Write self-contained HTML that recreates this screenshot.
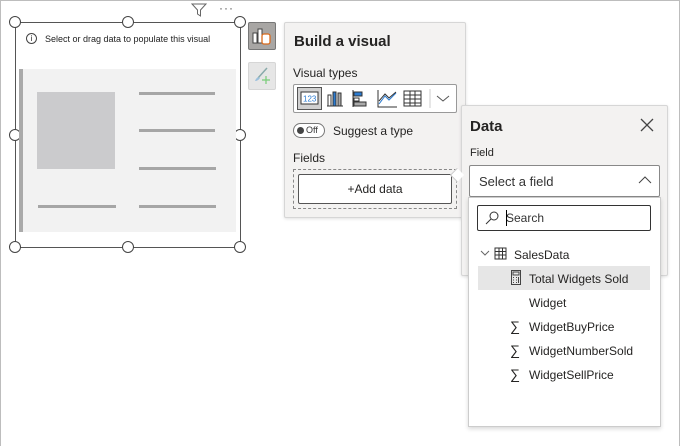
<!DOCTYPE html>
<html><head><style>
*{box-sizing:border-box;margin:0;padding:0}
body{width:680px;height:446px;background:#fff;font-family:"Liberation Sans",sans-serif;color:#252423;position:relative;overflow:hidden}
.a{position:absolute}
.h{position:absolute;width:12px;height:12px;border:1px solid #444;border-radius:50%;background:#fff}
.ln{position:absolute;height:3px;background:#a6a6a6}
</style></head><body>
<div class="a" style="left:0;top:0;width:680px;height:446px;border:1px solid #bdbdbd;border-bottom:none"></div>
<!-- visual frame -->
<div class="a" style="left:15px;top:22px;width:226px;height:226px;border:1px solid #555"></div>
<div class="h" style="left:9px;top:16px"></div><div class="h" style="left:122px;top:16px"></div><div class="h" style="left:234px;top:16px"></div>
<div class="h" style="left:9px;top:129px"></div><div class="h" style="left:234px;top:129px"></div>
<div class="h" style="left:9px;top:241px"></div><div class="h" style="left:122px;top:241px"></div><div class="h" style="left:234px;top:241px"></div>
<svg class="a" style="left:191px;top:3px" width="16" height="14"><path d="M1 1H15L9.5 7V13L6.5 11V7Z" fill="none" stroke="#666"/></svg>
<div class="a" style="left:219px;top:1px;font-size:12px;color:#555;letter-spacing:1px">···</div>
<div class="a" style="left:26px;top:33px;width:11px;height:11px;border:1px solid #444;border-radius:50%;font-size:8px;text-align:center;line-height:9px">i</div>
<div class="a" style="left:45px;top:34px;font-size:9px;color:#222">Select or drag data to populate this visual</div>
<div class="a" style="left:19px;top:69px;width:217px;height:163px;background:#f2f2f2"></div>
<div class="a" style="left:19px;top:69px;width:4px;height:163px;background:#aaa"></div>
<div class="a" style="left:37px;top:92px;width:78px;height:77px;background:#cbcbcd"></div>
<div class="ln" style="left:139px;top:92px;width:76px"></div>
<div class="ln" style="left:139px;top:129px;width:76px"></div>
<div class="ln" style="left:139px;top:167px;width:77px"></div>
<div class="ln" style="left:139px;top:205px;width:77px"></div>
<div class="ln" style="left:38px;top:205px;width:78px"></div>
<!-- side buttons -->
<div class="a" style="left:248px;top:22px;width:28px;height:28px;background:#a8a6a4;border:1px solid #777;border-radius:2px"></div>
<svg class="a" style="left:252px;top:26px" width="20" height="20"><rect x="1" y="7" width="4" height="10" fill="#fff" stroke="#444"/><rect x="6" y="3" width="4" height="14" fill="#fff" stroke="#444"/><rect x="10" y="8" width="8" height="10" rx="2" fill="#fff" stroke="#d86a1c" stroke-width="1.3"/></svg>
<div class="a" style="left:248px;top:62px;width:28px;height:28px;background:#e6e6e6;border:1px solid #d6d6d6;border-radius:2px"></div>
<svg class="a" style="left:252px;top:66px" width="20" height="20"><path d="M15 2L6 12" stroke="#8aa" stroke-width="1.5"/><path d="M3 15Q5 10 8 12Q6 15 3 15Z" fill="#9bc0dd"/><path d="M14 10V18M10 14H18" stroke="#7c7" stroke-width="1.2"/></svg>
<!-- build panel -->
<div class="a" style="left:284px;top:22px;width:182px;height:196px;background:#f3f2f1;border:1px solid #d6d6d6;border-radius:2px;box-shadow:0 1px 3px rgba(0,0,0,.12)"></div>
<div class="a" style="left:294px;top:33px;font-size:15px;font-weight:bold;color:#252423">Build a visual</div>
<div class="a" style="left:293px;top:66px;font-size:12px">Visual types</div>
<div class="a" style="left:293px;top:84px;width:164px;height:29px;background:#fff;border:1px solid #999;border-radius:2px"></div>
<div class="a" style="left:297px;top:87px;width:25px;height:23px;background:#d0d0d0;border:1px solid #555"></div>
<svg class="a" style="left:297px;top:87px" width="160" height="23">
<rect x="4" y="5" width="17" height="12" fill="#fff" stroke="#333"/><text x="6" y="14.5" font-size="8" fill="#2b7bd1" font-family="Liberation Sans">123</text>
<g stroke="#333" fill="none"><path d="M30 19H46"/><rect x="31" y="8" width="3" height="11"/><rect x="36" y="5" width="3" height="14" fill="#2b7bd1"/><rect x="41" y="6" width="3" height="13" fill="#aaa"/>
<path d="M56 3V20"/><rect x="57" y="5" width="8" height="4" fill="#2b7bd1"/><rect x="57" y="11" width="5" height="3"/><rect x="57" y="15" width="12" height="4" fill="#aaa"/>
<path d="M81 3V20H100"/><path d="M82 17L88 9L92 13L99 6" stroke="#2b7bd1"/><path d="M82 14L88 7L92 11L99 5"/>
<rect x="107" y="4" width="17" height="15"/><path d="M107 8H124M107 12H124M107 16H124M113 4V19M118 4V19"/>
<path d="M133 2V21" stroke="#ccc"/><path d="M140 9L146 14L152 9" stroke="#555"/></g></svg>
<div class="a" style="left:293px;top:123px;width:32px;height:15px;border:1px solid #777;border-radius:8px;background:#fff"></div>
<div class="a" style="left:297px;top:127px;width:7px;height:7px;border-radius:50%;background:#444"></div>
<div class="a" style="left:306px;top:125px;font-size:9px;color:#333">Off</div>
<div class="a" style="left:333px;top:124px;font-size:12px">Suggest a type</div>
<div class="a" style="left:293px;top:151px;font-size:12px">Fields</div>
<div class="a" style="left:293px;top:169px;width:164px;height:40px;border:1px dashed #888"></div>
<div class="a" style="left:298px;top:174px;width:154px;height:30px;background:#fff;border:1px solid #555;border-radius:2px;font-size:12px;text-align:center;line-height:28px">+Add data</div>
<!-- data panel -->
<div class="a" style="left:461px;top:105px;width:207px;height:171px;background:#f3f2f1;border:1px solid #d6d6d6;border-radius:2px;box-shadow:0 1px 3px rgba(0,0,0,.12)"></div>
<div class="a" style="left:452px;top:170px;width:10px;height:10px;background:#fff;border-left:1px solid #ccc;border-bottom:1px solid #ccc;transform:rotate(45deg)"></div>
<div class="a" style="left:470px;top:118px;font-size:15px;font-weight:bold">Data</div>
<svg class="a" style="left:640px;top:118px" width="14" height="14"><path d="M1 1L13 13M13 1L1 13" stroke="#444" stroke-width="1.3"/></svg>
<div class="a" style="left:470px;top:147px;font-size:11px">Field</div>
<div class="a" style="left:469px;top:165px;width:191px;height:32px;background:#fff;border:1px solid #888;border-radius:2px"></div>
<div class="a" style="left:479px;top:174px;font-size:13px;color:#333">Select a field</div>
<svg class="a" style="left:638px;top:175px" width="14" height="10"><path d="M1 8L7 2L13 8" fill="none" stroke="#444"/></svg>
<div class="a" style="left:468px;top:197px;width:193px;height:230px;background:#fff;border:1px solid #ccc;box-shadow:0 2px 4px rgba(0,0,0,.15)"></div>
<div class="a" style="left:477px;top:205px;width:174px;height:26px;border:1px solid #333;border-radius:2px"></div>
<svg class="a" style="left:485px;top:211px" width="14" height="14"><circle cx="9" cy="5" r="4" fill="none" stroke="#333"/><path d="M6 8L1 13" stroke="#333"/></svg>
<div class="a" style="left:506px;top:211px;font-size:12px;color:#333">Search</div>
<div class="a" style="left:506px;top:210px;width:1px;height:16px;background:#000"></div>
<svg class="a" style="left:480px;top:247px" width="30" height="14"><path d="M1 4L5 8L9 4" fill="none" stroke="#666"/><rect x="15" y="1" width="11" height="11" fill="none" stroke="#333"/><path d="M15 4.5H26M15 8H26M19 1V12M22.5 1V12" stroke="#333"/></svg>
<div class="a" style="left:514px;top:248px;font-size:12px">SalesData</div>
<div class="a" style="left:478px;top:266px;width:172px;height:24px;background:#e6e6e6"></div>
<svg class="a" style="left:511px;top:270px" width="10" height="15"><rect x="0.5" y="0.5" width="9" height="14" fill="none" stroke="#444"/><rect x="2" y="2" width="6" height="3" fill="none" stroke="#444"/><path d="M2 7.5H3M5 7.5H6M2 10H3M5 10H6M2 12.5H3M5 12.5H6M7.5 7V13" stroke="#444"/></svg>
<div class="a" style="left:529px;top:272px;font-size:12px">Total Widgets Sold</div>
<div class="a" style="left:529px;top:296px;font-size:12px">Widget</div>
<div class="a" style="left:510px;top:318px;font-size:14px">∑</div>
<div class="a" style="left:529px;top:320px;font-size:12px">WidgetBuyPrice</div>
<div class="a" style="left:510px;top:342px;font-size:14px">∑</div>
<div class="a" style="left:529px;top:344px;font-size:12px">WidgetNumberSold</div>
<div class="a" style="left:510px;top:366px;font-size:14px">∑</div>
<div class="a" style="left:529px;top:368px;font-size:12px">WidgetSellPrice</div>
</body></html>
